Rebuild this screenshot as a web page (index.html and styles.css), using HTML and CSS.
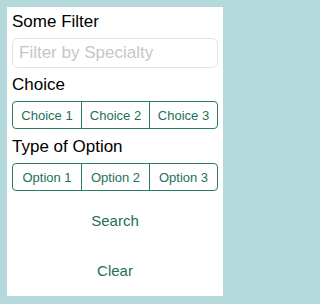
FILE: index.html
```html
<!DOCTYPE html>
<html>
<head>
<meta charset="utf-8">
<link rel="stylesheet" href="styles.css">
</head>
<body>
<div class="panel">
  <div class="label first">Some Filter</div>
  <div class="field"><span class="placeholder">Filter by Specialty</span></div>
  <div class="label">Choice</div>
  <div class="segmented">
    <div class="seg">Choice 1</div>
    <div class="seg">Choice 2</div>
    <div class="seg">Choice 3</div>
  </div>
  <div class="label second">Type of Option</div>
  <div class="segmented">
    <div class="seg">Option 1</div>
    <div class="seg">Option 2</div>
    <div class="seg">Option 3</div>
  </div>
  <div class="button search">Search</div>
  <div class="button">Clear</div>
</div>
</body>
</html>
```
FILE: styles.css
```css
html, body {
  margin: 0;
  padding: 0;
}
body {
  background: #b4d9da;
  font-family: "Liberation Sans", Arial, sans-serif;
  width: 231px;
  height: 304px;
  overflow: hidden;
}
.panel {
  margin: 7px 8px 0 7px;
  height: 289px;
  background: #ffffff;
  padding: 5px 5px 0 5px;
  box-sizing: border-box;
}
.label {
  font-size: 17px;
  line-height: 20px;
  color: #000;
  margin-top: 7px;
}
.label.first {
  margin-top: 0;
}
.label.second {
  margin-top: 8px;
}
.field {
  margin-top: 6px;
  height: 30px;
  border: 1px solid #e4e4e6;
  border-radius: 6px;
  box-sizing: border-box;
  display: flex;
  align-items: center;
  padding-left: 6px;
}
.placeholder {
  font-size: 17px;
  color: #c6c6c9;
}
.segmented {
  margin-top: 6px;
  height: 28px;
  display: grid;
  grid-template-columns: 1fr 1fr 1fr;
  border: 1px solid #2b7a62;
  border-radius: 4px;
  box-sizing: border-box;
  overflow: hidden;
}
.seg {
  display: flex;
  align-items: center;
  justify-content: center;
  font-size: 13px;
  color: #23705a;
}
.seg + .seg {
  border-left: 1px solid #2b7a62;
}
.button {
  height: 50px;
  line-height: 50px;
  text-align: center;
  font-size: 15px;
  color: #1f6e55;
}
.button.search {
  margin-top: 5px;
}
```
